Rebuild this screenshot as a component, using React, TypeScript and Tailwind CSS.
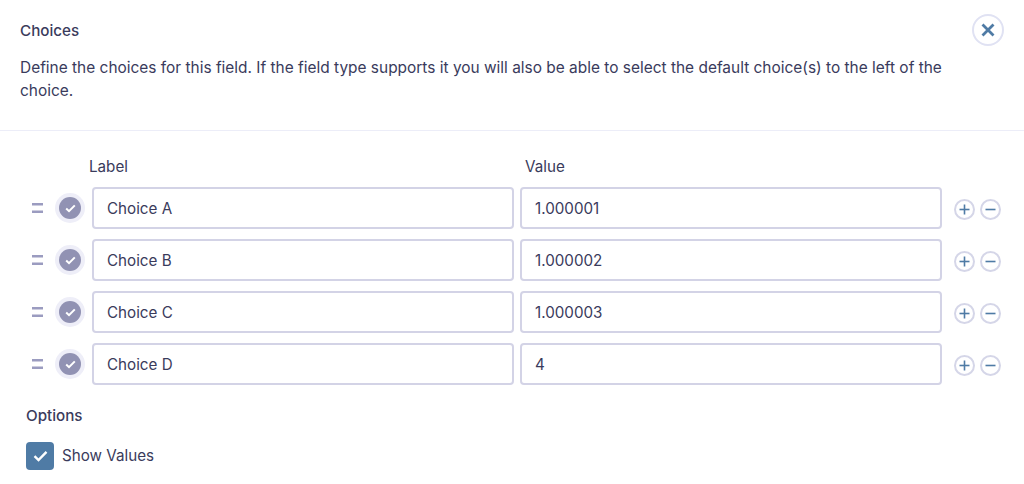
const rows = [
  ["Choice A", "1.000001"],
  ["Choice B", "1.000002"],
  ["Choice C", "1.000003"],
  ["Choice D", "4"],
];

function Round({ kind }: { kind: "plus" | "minus" }) {
  return (
    <span className="w-[21px] h-[21px] rounded-full border-2 border-[#d5d6e8] bg-white flex items-center justify-center">
      <svg width="11" height="11" viewBox="0 0 11 11" fill="none" stroke="#4f7ba5" strokeWidth="1.6">
        <path d="M0.5 5.5H10.5" />
        {kind === "plus" && <path d="M5.5 0.5V10.5" />}
      </svg>
    </span>
  );
}

export default function App() {
  return (
    <div className="w-[1024px] h-[484px] overflow-hidden bg-white text-[#3a3b5c] font-['Inter',sans-serif] text-[15.2px]">
      <div className="h-[131px] border-b border-[#ecedf8] pl-5 pr-5 pt-[14px] flex justify-between">
        <div className="w-[930px]">
          <div className="font-medium leading-[32px] pt-[1px] text-[15.2px]">Choices</div>
          <p className="mt-[9px] leading-[23px] text-[15.45px]">
            Define the choices for this field. If the field type supports it you will also be able to select the default choice(s) to the left of the choice.
          </p>
        </div>
        <button className="w-8 h-8 rounded-full border-2 border-[#e0e2f3] flex items-center justify-center">
          <svg width="14" height="14" viewBox="0 0 14 14" fill="none" stroke="#4f7ba5" strokeWidth="2.8">
            <path d="M1.5 1.5L12.5 12.5M12.5 1.5L1.5 12.5" />
          </svg>
        </button>
      </div>
      <div className="flex h-[56px] items-center pt-[17px]">
        <span className="ml-[89px] w-[436px]">Label</span>
        <span>Value</span>
      </div>
      <div className="flex flex-col gap-[10px]">
        {rows.map(([label, value]) => (
          <div key={label} className="flex items-center h-[42px]">
            <svg className="ml-[32px]" width="11" height="10" viewBox="0 0 11 10" fill="#9b9cc0">
              <rect y="0" width="11" height="2.5" />
              <rect y="7.5" width="11" height="2.5" />
            </svg>
            <span className="ml-[12px] w-[30px] h-[30px] rounded-full bg-[#eeeef8] flex items-center justify-center">
              <span className="w-[22px] h-[22px] rounded-full bg-[#9192b3] flex items-center justify-center">
                <svg width="11" height="9" viewBox="0 0 11 9" fill="none" stroke="#fff" strokeWidth="2">
                  <path d="M1.2 4.6L4 7.2L9.8 1.4" />
                </svg>
              </span>
            </span>
            <div className="ml-[7px] w-[422px] h-[42px] rounded-[4px] border-2 border-[#d3d3e6] pl-[13px] pt-[2px] flex items-center">{label}</div>
            <div className="ml-[6px] w-[422px] h-[42px] rounded-[4px] border-2 border-[#d3d3e6] pl-[13px] pt-[2px] flex items-center">{value}</div>
            <div className="ml-[12px] flex gap-[5px] mt-[2px]">
              <Round kind="plus" />
              <Round kind="minus" />
            </div>
          </div>
        ))}
      </div>
      <div className="ml-[26px] mt-[19px] font-medium leading-[24px]">Options</div>
      <label className="ml-[26px] mt-[14px] flex items-center gap-2">
        <span className="w-7 h-7 rounded-[4px] bg-[#4f7ba5] flex items-center justify-center">
          <svg width="15" height="12" viewBox="0 0 15 12" fill="none" stroke="#fff" strokeWidth="2.4">
            <path d="M1.5 6.2L5.5 10L13.5 1.8" />
          </svg>
        </span>
        <span>Show Values</span>
      </label>
    </div>
  );
}
